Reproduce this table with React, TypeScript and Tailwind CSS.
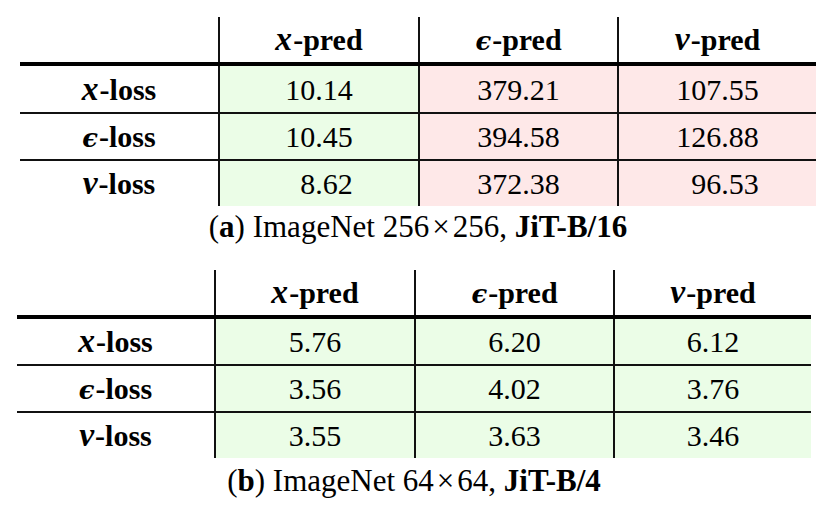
import React from "react";

type Sym = "x" | "e" | "v";

function MathSym({ s }: { s: Sym }) {
  if (s === "e")
    return (
      <span className="font-['DejaVu_Serif',serif] font-bold italic text-[0.86em] mr-[1px]">ϵ</span>
    );
  return (
    <span className="font-bold italic text-[1.12em] leading-none mr-[1px]">{s}</span>
  );
}

function Label({ s, text }: { s: Sym; text: string }) {
  return (
    <span className="font-bold">
      <MathSym s={s} />-{text}
    </span>
  );
}

type Cell = { v: string; pad?: boolean; c: "g" | "r" };

function Table({
  cols,
  rows,
  heights,
}: {
  cols: string;
  rows: Cell[][];
  heights: string[];
}) {
  const labels: Sym[] = ["x", "e", "v"];
  return (
    <div className="flex flex-col">
      <div className={`grid ${cols} h-[45px] text-[30px]`}>
        <div />
        {labels.map((l) => (
          <div key={l} className="border-l-2 border-[#111] flex items-center justify-center">
            <Label s={l} text="pred" />
          </div>
        ))}
      </div>
      <div className="h-[4px] bg-black" />
      {rows.map((r, i) => (
        <React.Fragment key={i}>
          {i > 0 && <div className="h-[2px] bg-[#111]" />}
          <div className={`grid ${cols} ${heights[i]} text-[30px]`}>
            <div className="flex items-center justify-center">
              <Label s={labels[i]} text="loss" />
            </div>
            {r.map((c, j) => (
              <div
                key={j}
                className={`border-l-2 border-[#111] flex items-center justify-center ${
                  c.c === "g" ? "bg-[#ebfde7]" : "bg-[#fee8e8]"
                }`}
              >
                <span>
                  {c.pad && <span className="invisible">1</span>}
                  {c.v}
                </span>
              </div>
            ))}
          </div>
        </React.Fragment>
      ))}
    </div>
  );
}

export default function App() {
  const rowsA: Cell[][] = [
    [
      { v: "10.14", c: "g" },
      { v: "379.21", c: "r" },
      { v: "107.55", c: "r" },
    ],
    [
      { v: "10.45", c: "g" },
      { v: "394.58", c: "r" },
      { v: "126.88", c: "r" },
    ],
    [
      { v: "8.62", pad: true, c: "g" },
      { v: "372.38", c: "r" },
      { v: "96.53", pad: true, c: "r" },
    ],
  ];
  const rowsB: Cell[][] = [
    [
      { v: "5.76", c: "g" },
      { v: "6.20", c: "g" },
      { v: "6.12", c: "g" },
    ],
    [
      { v: "3.56", c: "g" },
      { v: "4.02", c: "g" },
      { v: "3.76", c: "g" },
    ],
    [
      { v: "3.55", c: "g" },
      { v: "3.63", c: "g" },
      { v: "3.46", c: "g" },
    ],
  ];
  return (
    <div className="w-[838px] h-[514px] bg-white text-black font-['Liberation_Serif',serif] overflow-hidden">
      <div className="ml-[20px] mt-[17px] w-[796px]">
        <Table
          cols="grid-cols-[198px_200px_199px_199px]"
          rows={rowsA}
          heights={["h-[46px]", "h-[45px]", "h-[44px]"]}
        />
        <div className="h-[44px] flex items-center justify-center text-[31px] whitespace-nowrap">
          <span>
            (<b>a</b>) ImageNet 256<span className="mx-[3px]">×</span>256, <b>JiT-B/16</b>
          </span>
        </div>
      </div>
      <div className="ml-[17px] mt-[21px] w-[794px]">
        <Table
          cols="grid-cols-[197px_200px_199px_198px]"
          rows={rowsB}
          heights={["h-[45px]", "h-[45px]", "h-[44px]"]}
        />
        <div className="h-[48px] flex items-center justify-center text-[31px] whitespace-nowrap">
          <span>
            (<b>b</b>) ImageNet 64<span className="mx-[3px]">×</span>64, <b>JiT-B/4</b>
          </span>
        </div>
      </div>
    </div>
  );
}
